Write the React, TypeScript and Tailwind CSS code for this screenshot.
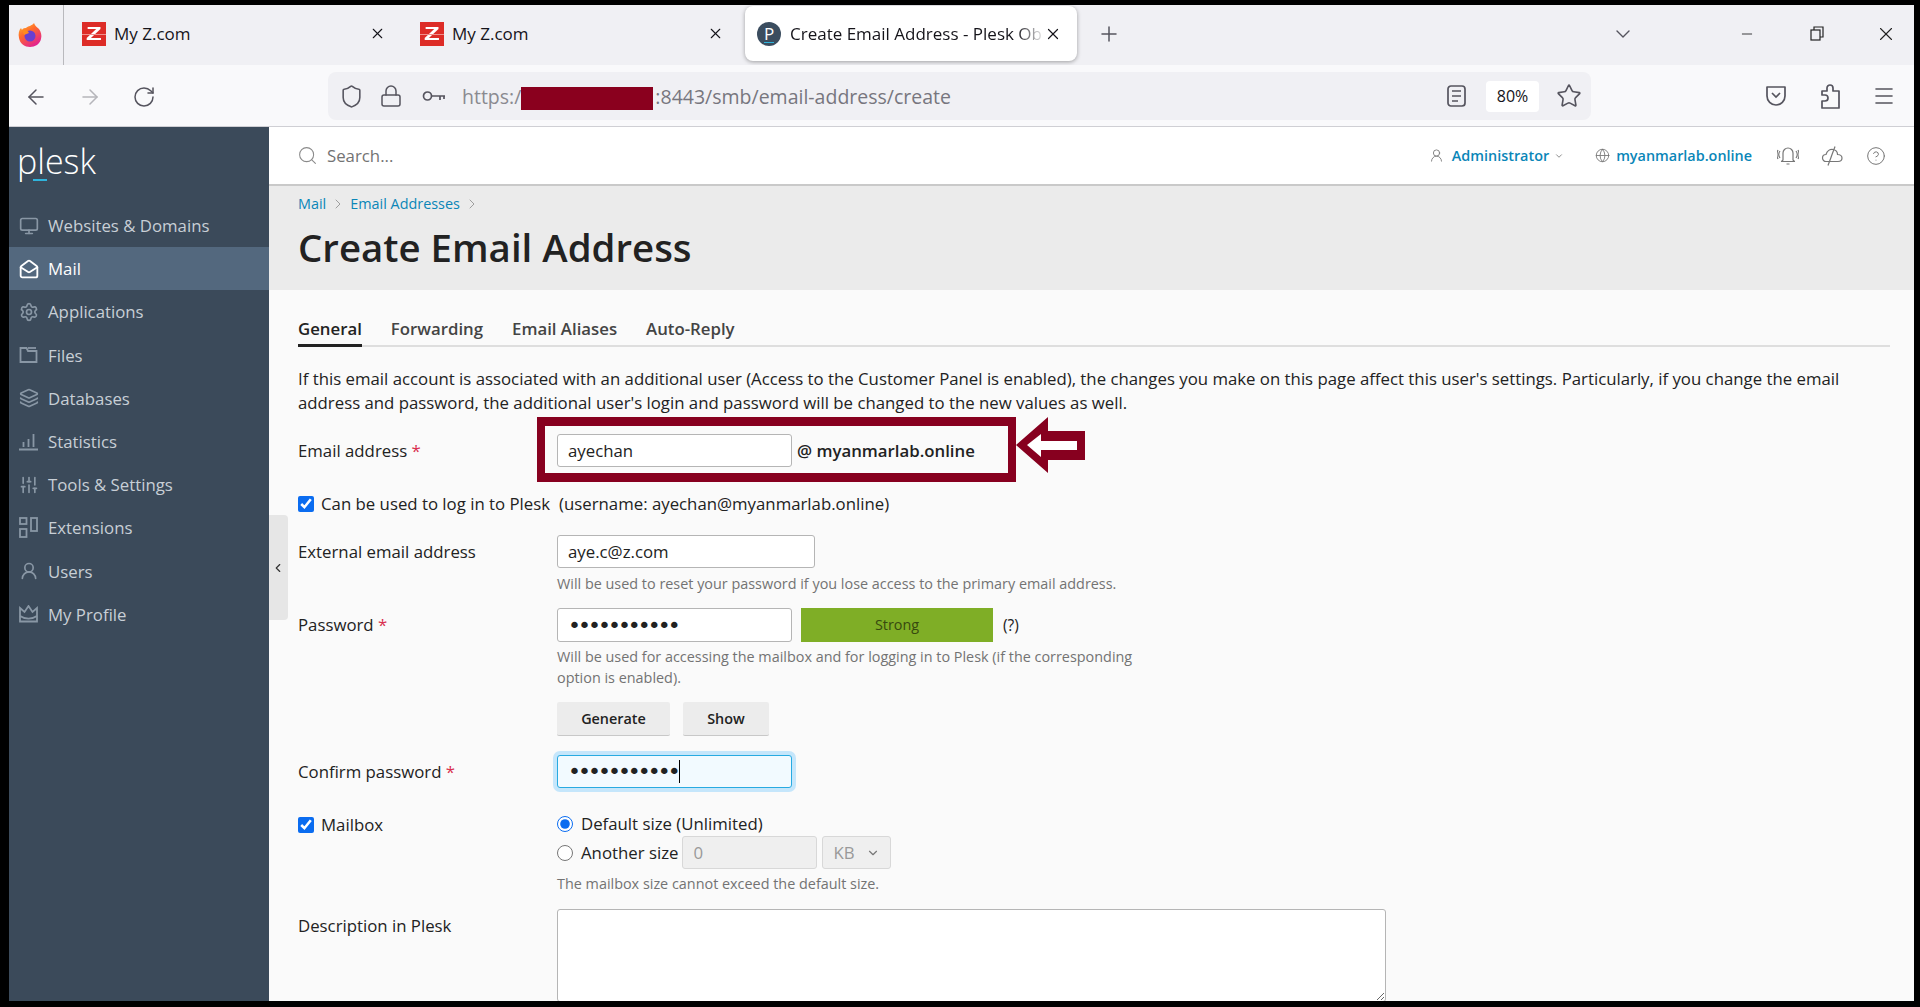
import React from "react";
import { ArrowLeft, ArrowRight, RotateCw, Plus, X, ChevronDown, Minus, ChevronLeft, ChevronRight, Menu, Star, Monitor, MailOpen, Settings, Layers, SlidersVertical, Search, CircleHelp, Globe, UserRound, Shield, Lock } from "lucide-react";

const FF = () => (
  <svg width="24" height="26" viewBox="0 0 24 26">
    <defs>
      <linearGradient id="ff" x1="0" y1="0" x2="0.6" y2="1"><stop offset="0" stopColor="#ffbd2e" /><stop offset="0.45" stopColor="#ff6a2b" /><stop offset="1" stopColor="#e3238f" /></linearGradient>
    </defs>
    <path d="M16 1c1 3 3 4 5 6 2 3 3 6 2 10-1 5-6 8-11 8S2 22 1 16C0 12 1 8 3 6l1 2c1-2 3-2 4-2 2-2 6-2 8-5z" fill="url(#ff)" />
    <circle cx="12" cy="14" r="5.5" fill="#6a3fd0" />
    <path d="M4 8c3-1 6 0 7 3l-5 2z" fill="#ff8a1f" />
  </svg>
);

const ZIcon = () => (
  <span className="relative flex h-[24px] w-[24px] shrink-0 items-center justify-center overflow-hidden bg-[#dd2c27]">
    <span className="scale-x-[1.35] text-[19px] font-bold leading-none text-white" style={{ fontFamily: '"Liberation Sans", sans-serif' }}>Z</span>
    <span className="absolute left-0 top-[12px] h-[1px] w-full bg-[#f08f8c]" />
  </span>
);

const BrowserTab = ({ ml, w }: { ml: string; w: string }) => (
  <div className={`flex items-center ${ml} ${w}`}>
    <ZIcon />
    <span className="ml-[8px] text-[17px] text-[#15141a]">My Z.com</span>
    <X className="ml-auto text-[#15141a]" size={17} strokeWidth={1.5} />
  </div>
);

const FolderI = () => (
  <svg width="19" height="19" viewBox="0 0 19 19" fill="none" stroke="currentColor" strokeWidth="1.8"><path d="M1.5 2v14h16V5H9L7.5 2z" /><path d="M9 2h8" /></svg>
);
const StatsI = () => (
  <svg width="19" height="19" viewBox="0 0 19 19" fill="none" stroke="currentColor" strokeWidth="1.8"><path d="M0 17.5h19M4.5 15v-5M9.5 15V7M14.5 15V2" /></svg>
);
const ExtI = () => (
  <svg width="19" height="21" viewBox="0 0 19 21" fill="none" stroke="currentColor" strokeWidth="1.8"><rect x="1" y="1" width="6.5" height="6" /><rect x="1" y="12" width="6.5" height="8" /><rect x="12" y="1" width="6" height="13" /></svg>
);
const CrownI = () => (
  <svg width="19" height="19" viewBox="0 0 19 19" fill="none" stroke="currentColor" strokeWidth="1.8"><path d="M1 3l4.5 4L9.5 1l4 6L18 3v13.5H1z" /><path d="M1 11c5 3.5 12 3.5 17 0" /></svg>
);
const KeyI = () => (
  <svg width="24" height="12" viewBox="0 0 24 12" fill="none" stroke="#55545e" strokeWidth="1.7"><circle cx="5.5" cy="6" r="4" /><path d="M9.5 6H23M18 6v4M22 6v3" /></svg>
);
const BellI = () => (
  <svg width="22" height="20" viewBox="0 0 22 20" fill="none" stroke="#777" strokeWidth="1.2"><path d="M6 14V7a5 5 0 0 1 10 0v7l1.5 1.5h-13z" strokeLinejoin="round" /><path d="M9.5 18h3M3 5c-1.5 2-1.5 5 0 7M1 4c-1.5 3-1.5 6 0 9M19 5c1.5 2 1.5 5 0 7M21 4c1.500 3 1.500 6 0 9" /></svg>
);
const CloudI = () => (
  <svg width="22" height="20" viewBox="0 0 22 20" fill="none" stroke="#777" strokeWidth="1.2"><path d="M5 15.500a3.500 3.500 0 0 1 0-7c1-3.500 4-5.500 7-5 3 .5 4.500 3 4.500 5 2.500 0 4.500 1.500 4.500 3.500s-1.500 3.500-4 3.500z" strokeLinejoin="round" /><path d="M14 .5L7 19.500" /></svg>
);

const nav: [string, React.ReactNode, boolean?][] = [
  ["Websites & Domains", <Monitor size={20} strokeWidth={2} />],
  ["Mail", <MailOpen size={20} strokeWidth={2.2} />, true],
  ["Applications", <Settings size={20} strokeWidth={2} />],
  ["Files", <FolderI />],
  ["Databases", <Layers size={20} strokeWidth={2} />],
  ["Statistics", <StatsI />],
  ["Tools & Settings", <SlidersVertical size={20} strokeWidth={2} />],
  ["Extensions", <ExtI />],
  ["Users", <UserRound size={20} strokeWidth={2} />],
  ["My Profile", <CrownI />],
];

const inputCls = "h-full rounded-[3px] border border-[#b5b5b5] bg-white px-[10px] text-[16.8px] text-[#222] outline-none";
const Req = () => <span className="text-[#d9304f]"> *</span>;
const dots = { fontFamily: '"DejaVu Sans", sans-serif' };

const Row = ({ label, h, mt, children }: { label: React.ReactNode; h: string; mt: string; children: React.ReactNode }) => (
  <div className={`flex ${mt}`}>
    <div className={`flex w-[259px] shrink-0 items-center text-[16.8px] text-[#222] ${h}`}><span>{label}</span></div>
    <div className={`flex items-center ${h}`}>{children}</div>
  </div>
);

export default function App() {
  return (
    <div className="flex h-[1007px] w-full flex-col overflow-hidden bg-black pb-[6px] pl-[9px] pr-[6px] pt-[5px]" style={{ fontFamily: '"Open Sans", sans-serif' }}>
      {/* tab bar */}
      <div className="flex h-[60px] shrink-0 items-center bg-[#f0f0f4] pb-[3px]">
        <div className="-mb-[3px] flex h-[60px] w-[55px] shrink-0 items-center border-r border-[#b9b9bd] pl-[9px]"><FF /></div>
        <BrowserTab ml="ml-[18px]" w="w-[304px]" />
        <BrowserTab ml="ml-[34px]" w="w-[304px]" />
        <div className="ml-[21px] mt-[1px] flex h-[55px] w-[332px] shrink-0 items-center self-start rounded-[8px] bg-white pl-[12px] shadow-[0_1px_4px_rgba(0,0,0,0.35)]">
          <span className="relative flex h-[24px] w-[24px] shrink-0 items-center justify-center rounded-full bg-[#3b4d5f] text-[17px] leading-none text-white">
            P
            <span className="absolute bottom-[3px] left-[7px] h-[1px] w-[10px] bg-[#2fb4dc]" />
          </span>
          <span className="ml-[9px] w-[252px] whitespace-nowrap text-[17px] text-[#15141a]" style={{ WebkitMaskImage: "linear-gradient(to right, black 90%, rgba(0,0,0,0.1))" }}>Create Email Address - Plesk Ob</span>
          <X className="ml-[2px] text-[#15141a]" size={18} strokeWidth={1.6} />
        </div>
        <Plus className="ml-[20px] text-[#55545e]" size={24} strokeWidth={1.5} />
        <ChevronDown className="ml-[490px] text-[#55545e]" size={24} strokeWidth={1.4} />
        <Minus className="ml-[104px] text-[#222]" size={16} strokeWidth={1.3} />
        <svg className="ml-[55px]" width="15" height="15" viewBox="0 0 15 15" fill="none" stroke="#222" strokeWidth="1.2"><rect x="1" y="4" width="9" height="10" /><path d="M4 4V1h9v10h-3" /></svg>
        <X className="ml-[50px] text-[#222]" size={22} strokeWidth={1.2} />
      </div>
      {/* toolbar */}
      <div className="flex h-[62px] shrink-0 items-center border-b border-[#cfcfd4] bg-[#f9f9fb] pt-[1px]">
        <ArrowLeft className="ml-[15px] mt-[2px] text-[#55545e]" size={24} strokeWidth={1.5} />
        <ArrowRight className="ml-[30px] mt-[2px] text-[#b5b5ba]" size={24} strokeWidth={1.5} />
        <RotateCw className="ml-[30px] mt-[2px] text-[#55545e]" size={24} strokeWidth={1.5} />
        <div className="ml-[172px] flex h-[48px] w-[1263px] items-center rounded-[8px] bg-[#f0f0f4]">
          <Shield className="ml-[11px] text-[#55545e]" size={25} strokeWidth={1.5} />
          <Lock className="ml-[15px] text-[#55545e]" size={24} strokeWidth={1.5} />
          <span className="ml-[19px]"><KeyI /></span>
          <span className="ml-[16px] mt-[2px] text-[19.5px] text-[#8a8a90]">https:/</span>
          <span className="mt-[4px] h-[23px] w-[132px] bg-[#8a001e]" />
          <span className="ml-[2px] mt-[2px] whitespace-nowrap text-[19.5px] text-[#77767e]">:8443/smb/email-address/create</span>
          <svg className="ml-auto" width="19" height="22" viewBox="0 0 19 22" fill="none" stroke="#55545e" strokeWidth="1.7"><rect x="1" y="1" width="17" height="20" rx="3" /><path d="M5 6h9M5 11h9M5 16h6" /></svg>
          <span className="ml-[20px] flex h-[31px] w-[53px] items-center justify-center rounded-[4px] bg-white text-[16px] text-[#15141a]">80%</span>
          <Star className="ml-[17px] mr-[9px] text-[#55545e]" size={26} strokeWidth={1.5} />
        </div>
        <svg className="ml-[174px]" width="22" height="22" viewBox="0 0 22 22" fill="none" stroke="#55545e" strokeWidth="1.7"><path d="M2 2h18v9a9 9 0 0 1-18 0z" strokeLinejoin="round" /><path d="M7 8l4 4 4-4" /></svg>
        <svg className="ml-[32px]" width="22" height="25" viewBox="0 0 22 25" fill="none" stroke="#55545e" strokeWidth="1.7"><path d="M8 7V4a3 3 0 0 1 6 0v3h6v17H3v-7h3a3 3 0 0 0 0-6H3V7z" strokeLinejoin="round" /></svg>
        <Menu className="ml-[31px] text-[#55545e]" size={24} strokeWidth={1.6} />
      </div>
      {/* plesk */}
      <div className="relative flex min-h-0 flex-1">
        <aside className="w-[260px] shrink-0 bg-[#3b4a5a]">
          <div className="relative h-[77px] pl-[8px] pt-[10px] text-[34px] font-light leading-[48px] text-white">
            plesk
            <span className="absolute left-[24px] top-[52px] h-[2px] w-[14px] bg-[#2fb4dc]" />
          </div>
          {nav.map(([t, ic, active]) => (
            <div key={t} className={`flex h-[43.2px] items-center pl-[10px] text-[16.8px] ${active ? "bg-[#53687e] text-white" : "text-[#c8cfd6]"}`}>
              <span className={`flex w-[29px] items-center ${active ? "text-white" : "text-[#8997a5]"}`}>{ic}</span>
              <span>{t}</span>
            </div>
          ))}
        </aside>
        <main className="relative flex min-w-0 flex-1 flex-col overflow-hidden bg-[#fafafa]">
          <div className="absolute left-0 top-[388px] flex h-[105px] w-[19px] items-center justify-center rounded-r-[4px] bg-[#e6e6e6]"><ChevronLeft size={14} className="-ml-[2px] text-[#333]" /></div>
          <header className="flex h-[59px] shrink-0 items-center border-b-2 border-[#c9c9c9] bg-white pl-[28px] pr-[28px]">
            <Search className="text-[#8a8a8a]" size={21} strokeWidth={1.2} />
            <span className="ml-[9px] text-[16.8px] text-[#737373]">Search...</span>
            <UserRound className="ml-auto text-[#777]" size={15} strokeWidth={1.4} />
            <span className="ml-[8px] text-[14.4px] font-semibold text-[#0a86b8]">Administrator</span>
            <ChevronDown className="ml-[5px] text-[#777]" size={10} />
            <Globe className="ml-[31px] text-[#777]" size={15} strokeWidth={1.4} />
            <span className="ml-[6px] text-[14.4px] font-semibold text-[#0a86b8]">myanmarlab.online</span>
            <span className="ml-[25px]"><BellI /></span>
            <span className="ml-[22px]"><CloudI /></span>
            <CircleHelp className="ml-[23px] text-[#777]" size={20} strokeWidth={1.2} />
          </header>
          <section className="h-[104px] shrink-0 bg-[#ebebeb] pl-[29px] pt-[8px]">
            <div className="flex items-center text-[14.4px] leading-[20px] text-[#0a86b8]">
              <span>Mail</span><ChevronRight className="mx-[4px] text-[#8a8a8a]" size={16} strokeWidth={1.2} />
              <span>Email Addresses</span><ChevronRight className="ml-[4px] text-[#8a8a8a]" size={16} strokeWidth={1.2} />
            </div>
            <h1 className="mt-[8px] text-[38.4px] font-semibold leading-[50px] text-[#222]">Create Email Address</h1>
          </section>
          <div className="min-h-0 flex-1 pl-[29px] pr-[24px]">
            <div className="mt-[26px] flex h-[31px] gap-[29px] border-b-2 border-[#dedede] text-[16.8px] font-semibold text-[#444]">
              <span className="-mb-[2px] border-b-[3px] border-[#222] text-[#222]">General</span>
              <span>Forwarding</span>
              <span>Email Aliases</span>
              <span>Auto-Reply</span>
            </div>
            <p className="mt-[20px] text-[16.8px] leading-[24px] text-[#222]">If this email account is associated with an additional user (Access to the Customer Panel is enabled), the changes you make on this page affect this user's settings. Particularly, if you change the email address and password, the additional user's login and password will be changed to the new values as well.</p>

            <div className="relative mt-[19px]">
              <Row label={<>Email address<Req /></>} h="h-[33px]" mt="mt-0">
                <input readOnly value="ayechan" className={`w-[235px] ${inputCls}`} />
                <span className="ml-[5px] text-[16.8px] font-semibold text-[#222]">@ myanmarlab.online</span>
              </Row>
              <div className="absolute left-[239px] top-[-17px] h-[65px] w-[479px] border-x-[8px] border-y-[9px] border-[#87001f]" />
              <svg className="absolute left-[718px] top-[-17px]" width="69" height="56" viewBox="0 0 69 56">
                <polygon points="0,28 32,0 32,14 69,14 69,43 32,43 32,56" fill="#87001f" />
                <polygon points="11,28 25,17 25,24 61,24 61,33 25,33 25,40" fill="#fff" />
              </svg>
            </div>

            <div className="mt-[25px] flex h-[24px] items-center text-[16.8px] text-[#222]">
              <input type="checkbox" readOnly checked className="h-[16px] w-[16px] accent-[#0a6cf0]" />
              <span className="ml-[7px]">Can be used to log in to Plesk</span>
              <span className="ml-[9px]">(username: ayechan@myanmarlab.online)</span>
            </div>

            <Row label="External email address" h="h-[33px]" mt="mt-[19px]">
              <input readOnly value="aye.c@z.com" className={`w-[258px] ${inputCls}`} />
            </Row>
            <p className="ml-[259px] mt-[6px] text-[14.4px] leading-[20px] text-[#737373]">Will be used to reset your password if you lose access to the primary email address.</p>

            <Row label={<>Password<Req /></>} h="h-[34px]" mt="mt-[14px]">
              <input readOnly type="password" value="aaaaaaaaaaa" style={dots} className="h-full w-[235px] rounded-[3px] border border-[#b5b5b5] bg-white px-[10px] text-[22px] tracking-[-3px] text-[#222] outline-none" />
              <div className="ml-[9px] flex h-full w-[192px] items-center justify-center bg-[#7fae26] text-[14.4px] text-[#37490f]">Strong</div>
              <span className="ml-[10px] mt-[2px] text-[15.5px] text-[#222]">(?)</span>
            </Row>
            <p className="ml-[259px] mt-[4px] w-[600px] text-[14.4px] leading-[21px] text-[#737373]">Will be used for accessing the mailbox and for logging in to Plesk (if the corresponding option is enabled).</p>
            <div className="ml-[259px] mt-[14px] flex h-[34px] gap-[13px] text-[14.4px] font-semibold text-[#222]">
              <div className="flex w-[113px] items-center justify-center rounded-[2px] border-b border-[#c8c8c8] bg-[#ececec]">Generate</div>
              <div className="flex w-[86px] items-center justify-center rounded-[2px] border-b border-[#c8c8c8] bg-[#ececec]">Show</div>
            </div>

            <Row label={<>Confirm password<Req /></>} h="h-[33px]" mt="mt-[19px]">
              <div className="relative h-full w-[235px]">
                <input readOnly type="password" value="aaaaaaaaaaa" style={dots} className="h-full w-full rounded-[3px] border border-[#28aae1] bg-[#f2faff] px-[10px] text-[22px] tracking-[-3px] text-[#222] shadow-[0_0_0_4px_#c5e6fb] outline-none" />
                <span className="absolute left-[122px] top-[5px] h-[23px] w-[1px] bg-black" />
              </div>
            </Row>

            <div className="mt-[24px] flex">
              <div className="flex h-[26px] w-[259px] shrink-0 items-center text-[16.8px] text-[#222]">
                <input type="checkbox" readOnly checked className="h-[16px] w-[16px] accent-[#0a6cf0]" />
                <span className="ml-[7px]">Mailbox</span>
              </div>
              <div className="flex flex-col">
                <div className="flex h-[24px] items-center text-[16.8px] text-[#222]">
                  <input type="radio" readOnly checked className="h-[16px] w-[16px] accent-[#0a6cf0]" />
                  <span className="ml-[8px]">Default size (Unlimited)</span>
                </div>
                <div className="flex h-[33px] items-center text-[16.8px] text-[#222]">
                  <input type="radio" readOnly checked={false} className="h-[16px] w-[16px]" />
                  <span className="ml-[8px]">Another size</span>
                  <input readOnly value="0" className="ml-[4px] h-full w-[135px] rounded-[3px] border border-[#d8d8d8] bg-[#efefef] px-[10px] text-[16.8px] text-[#999] outline-none" />
                  <div className="ml-[5px] flex h-full w-[69px] items-center justify-between rounded-[3px] border border-[#d8d8d8] bg-[#efefef] px-[10px] text-[16.8px] text-[#999]">KB<ChevronDown size={14} className="text-[#777]" /></div>
                </div>
                <p className="mt-[5px] text-[14.4px] leading-[20px] text-[#737373]">The mailbox size cannot exceed the default size.</p>
              </div>
            </div>

            <div className="mt-[15px] flex">
              <div className="w-[259px] shrink-0 pt-[5px] text-[16.8px] leading-[24px] text-[#222]">Description in Plesk</div>
              <textarea readOnly className="h-[93px] w-[829px] rounded-[3px] border border-[#b5b5b5] bg-white outline-none" />
            </div>
          </div>
        </main>
      </div>
    </div>
  );
}
